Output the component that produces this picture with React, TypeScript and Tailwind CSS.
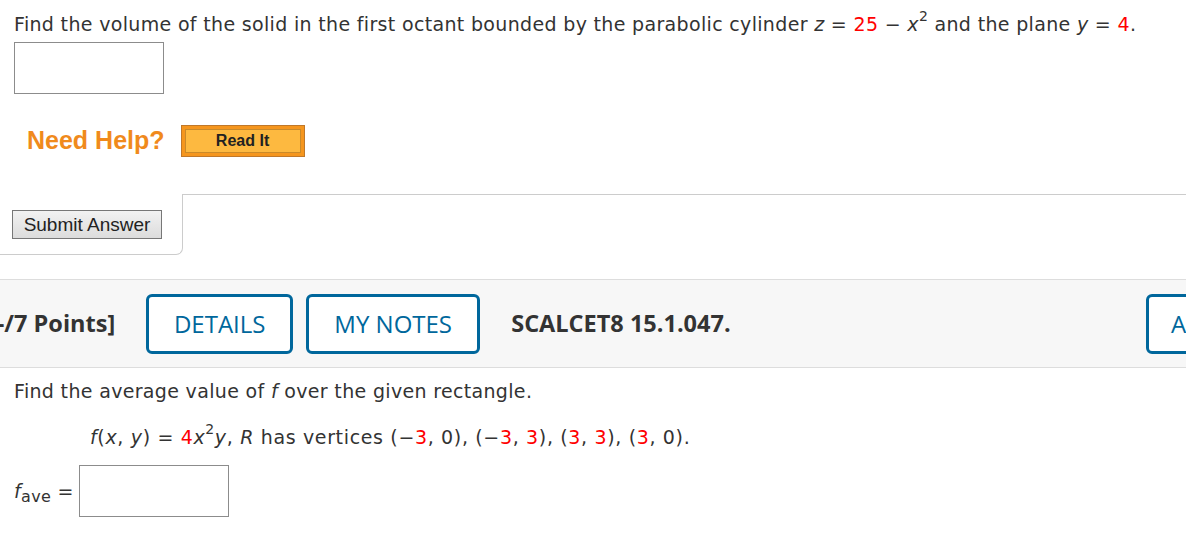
import React from 'react';

const verdana = { fontFamily: 'Verdana, "DejaVu Sans", sans-serif' };

function Red({ children }: { children: React.ReactNode }) {
  return <span className="text-[#ff0000]">{children}</span>;
}

function Blank({ className = '' }: { className?: string }) {
  return <div className={`w-[150px] h-[52px] border border-[#8c8c8c] bg-white ${className}`} />;
}

export default function App() {
  return (
    <div className="w-[1186px] h-[544px] overflow-hidden bg-white text-[#333]" style={verdana}>
      <div className="pl-[14px] pt-[11px]">
        <p className="text-[19px] tracking-[0.33px] leading-[26px] whitespace-nowrap">
          Find the volume of the solid in the first octant bounded by the parabolic cylinder <i>z</i> = <Red>25</Red> − <i>x</i>
          <sup className="text-[14px] -top-[10px]">2</sup> and the plane <i>y</i> = <Red>4</Red>.
        </p>
        <Blank className="mt-[5px]" />
      </div>

      <div className="flex items-center mt-[31px] pl-[27px] h-[32px]" style={{ fontFamily: 'Arial, "Liberation Sans", sans-serif' }}>
        <span className="text-[25px] font-bold text-[#f08a1c]">Need Help?</span>
        <button className="ml-[16px] w-[124px] h-[32px] bg-[#f5961e] border border-[#c0782a] p-[3px] flex">
          <span className="flex-1 flex items-center justify-center bg-[#fdb940] border border-[#c98a2a] text-[16px] font-bold text-[#222]">
            Read It
          </span>
        </button>
      </div>

      <div className="flex mt-[37px]">
        <div className="w-[183px] h-[61px] border-r border-b border-[#cccccc] rounded-br-[7px] flex items-center pl-[12px]">
          <button
            className="w-[150px] h-[29px] border border-[#777] bg-gradient-to-b from-[#f2f2f2] to-[#dcdcdc] text-[19px] text-[#222] leading-none"
            style={{ fontFamily: 'Arial, "Liberation Sans", sans-serif' }}
          >
            Submit Answer
          </button>
        </div>
        <div className="flex-1 border-t border-[#cccccc] h-px" />
      </div>

      <div
        className="mt-[24px] h-[89px] bg-[#f7f7f7] border-t border-b border-[#dddddd] flex items-center"
        style={{ fontFamily: '"Open Sans", sans-serif' }}
      >
        <span className="-ml-[11px] text-[23.5px] font-bold text-[#333] whitespace-nowrap">[-/7 Points]</span>
        <button className="ml-[31px] w-[147px] h-[60px] border-[3px] border-[#00679c] rounded-[6px] bg-white text-[24px] text-[#00679c] shrink-0">
          DETAILS
        </button>
        <button className="ml-[13px] w-[174px] h-[60px] border-[3px] border-[#00679c] rounded-[6px] bg-white text-[24px] text-[#00679c] shrink-0">
          MY NOTES
        </button>
        <span className="ml-[31px] text-[23.5px] font-bold text-[#333] whitespace-nowrap">SCALCET8 15.1.047.</span>
        <button className="ml-auto -mr-[200px] w-[240px] h-[60px] border-[3px] border-[#00679c] rounded-[6px] bg-white text-[24px] text-[#00679c] text-left pl-[22px] shrink-0 whitespace-nowrap">
          ASK YOUR TEACHER
        </button>
      </div>

      <div className="pl-[14px] pt-[10px] text-[19px] tracking-[0.33px]">
        <p className="leading-[26px]">
          Find the average value of <i>f</i> over the given rectangle.
        </p>
        <p className="leading-[26px] mt-[20px] pl-[76px] whitespace-nowrap tracking-[0.65px]">
          <i>f</i>(<i>x</i>, <i>y</i>) = <Red>4</Red><i>x</i>
          <sup className="text-[14px] -top-[10px]">2</sup>
          <i>y</i>, <i>R</i> has vertices (−<Red>3</Red>, 0), (−<Red>3</Red>, <Red>3</Red>), (<Red>3</Red>, <Red>3</Red>), (<Red>3</Red>, 0).
        </p>
        <div className="flex items-center mt-[15px]">
          <span className="whitespace-nowrap">
            <i>f</i>
            <sub className="text-[16px]">ave</sub> =
          </span>
          <Blank className="ml-[5px]" />
        </div>
      </div>
    </div>
  );
}
